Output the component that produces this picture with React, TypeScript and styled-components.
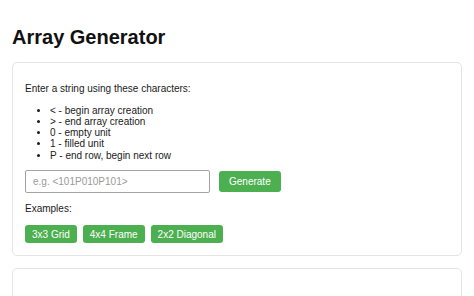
import React from "react";
import styled, { createGlobalStyle } from "styled-components";

const Global = createGlobalStyle`
  html, body {
    margin: 0;
    padding: 0;
    background: #ffffff;
  }
  body {
    font-family: "Liberation Sans", Arial, sans-serif;
    color: #1a1a1a;
  }
  * { box-sizing: border-box; }
`;

const Page = styled.div`
  padding: 12px 12px 0;
`;

const Title = styled.h1`
  font-size: 20px;
  font-weight: bold;
  color: #111111;
  margin: 14px 0 13px;
  line-height: 23px;
`;

const Card = styled.section<{ $minHeight?: number }>`
  border: 1px solid #e4e4e4;
  border-radius: 5px;
  padding: 12px;
  margin-bottom: 12px;
  background: #ffffff;
  min-height: ${(p) => (p.$minHeight ? `${p.$minHeight}px` : "auto")};
`;

const Text = styled.p<{ $mt: number; $mb: number }>`
  font-size: 10px;
  line-height: 11.5px;
  margin: ${(p) => p.$mt}px 0 ${(p) => p.$mb}px;
`;

const List = styled.ul`
  font-size: 10px;
  line-height: 11.3px;
  margin: 0 0 9px;
  padding-left: 25px;
`;

const Row = styled.div`
  display: flex;
  align-items: center;
  gap: 9px;
`;

const Input = styled.input`
  width: 185px;
  height: 23px;
  border: 1px solid #a3a3a3;
  border-radius: 2px;
  padding: 0 7px;
  font-family: "Liberation Sans", Arial, sans-serif;
  font-size: 10px;
  color: #222;
  &::placeholder {
    color: #9a9a9a;
  }
`;

const Button = styled.button<{ $size: "md" | "sm" }>`
  height: ${(p) => (p.$size === "md" ? 21 : 18)}px;
  padding: 0 ${(p) => (p.$size === "md" ? 10 : 7)}px;
  background: #4caf50;
  color: #ffffff;
  border: none;
  border-radius: 3px;
  font-family: "Liberation Sans", Arial, sans-serif;
  font-size: 10px;
  cursor: pointer;
`;

const Examples = styled.div`
  display: flex;
  gap: 6px;
`;

const chars = [
  "< - begin array creation",
  "> - end array creation",
  "0 - empty unit",
  "1 - filled unit",
  "P - end row, begin next row",
];

export default function App() {
  return (
    <Page>
      <Global />
      <Title>Array Generator</Title>
      <Card>
        <Text $mt={8} $mb={10}>Enter a string using these characters:</Text>
        <List>
          {chars.map((c) => (
            <li key={c}>{c}</li>
          ))}
        </List>
        <Row>
          <Input placeholder="e.g. <101P010P101>" />
          <Button $size="md">Generate</Button>
        </Row>
        <Text $mt={10} $mb={11}>Examples:</Text>
        <Examples>
          <Button $size="sm">3x3 Grid</Button>
          <Button $size="sm">4x4 Frame</Button>
          <Button $size="sm">2x2 Diagonal</Button>
        </Examples>
      </Card>
      <Card $minHeight={100} />
    </Page>
  );
}
